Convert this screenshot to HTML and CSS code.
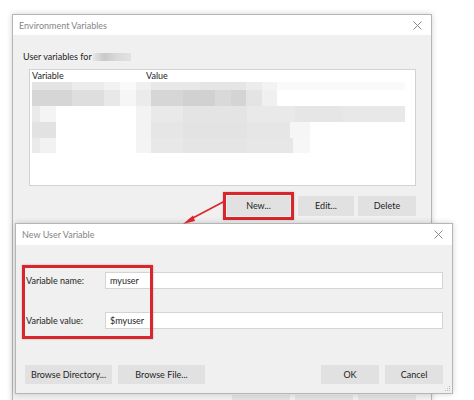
FILE: index.html
```html
<!DOCTYPE html>
<html>
<head>
    <title>Environment Variables</title>
    <link rel="stylesheet" href="styles.css">
</head>
<body>
    <div class="desk">
        <!-- 后面的 Environment Variables 窗口 -->
        <div class="win env-win">
            <div class="win-title">
                <span>Environment Variables</span>
                <svg class="close" width="9" height="9" viewBox="0 0 9 9"><path d="M0.5 0.5L8.5 8.5M8.5 0.5L0.5 8.5" stroke="#8a8a8a" stroke-width="1"/></svg>
            </div>
            <div class="win-body env-body">
                <div class="group-label">User variables for <span class="name-blur"></span></div>
                <div class="var-list">
                    <div class="list-head">
                        <div class="col-var">Variable</div>
                        <div class="col-val">Value</div>
                    </div>
                    <div class="mosaic" id="mosaic"></div>
                </div>
                <div class="btn-row">
                    <span class="mark"><button class="btn w63">New...</button></span>
                    <button class="btn w56">Edit...</button>
                    <button class="btn w58">Delete</button>
                </div>
                <!-- 被遮住的底部按钮，只露出顶边 -->
                <div class="btn-row footer-row">
                    <button class="btn w58"></button>
                    <button class="btn w58"></button>
                    <button class="btn w58"></button>
                </div>
            </div>
        </div>

        <!-- 红色箭头标注 -->
        <svg class="arrow" width="60" height="40" viewBox="0 0 60 40">
            <path d="M48 3L12 22" stroke="#d9252b" stroke-width="1.6" fill="none"/>
            <path d="M6 26L16 17.5L18 23Z" fill="#d9252b"/>
        </svg>

        <!-- 前面的 New User Variable 窗口 -->
        <div class="win new-win">
            <div class="win-title">
                <span>New User Variable</span>
                <svg class="close" width="9" height="9" viewBox="0 0 9 9"><path d="M0.5 0.5L8.5 8.5M8.5 0.5L0.5 8.5" stroke="#8a8a8a" stroke-width="1"/></svg>
            </div>
            <div class="win-body new-body">
                <div class="form">
                    <div class="form-row">
                        <div class="form-label">Variable name:</div>
                        <div class="input">myuser</div>
                    </div>
                    <div class="form-row">
                        <div class="form-label">Variable value:</div>
                        <div class="input">$myuser</div>
                    </div>
                    <div class="mark-box"></div>
                </div>
                <div class="dlg-buttons">
                    <button class="btn w87">Browse Directory...</button>
                    <button class="btn w87">Browse File...</button>
                    <div class="spacer"></div>
                    <button class="btn w58">OK</button>
                    <button class="btn w58">Cancel</button>
                </div>
                <svg class="grip" width="6" height="6" viewBox="0 0 6 6">
                    <rect x="4" y="0" width="1" height="1" fill="#bbb"/>
                    <rect x="2" y="2" width="1" height="1" fill="#bbb"/>
                    <rect x="4" y="2" width="1" height="1" fill="#bbb"/>
                    <rect x="0" y="4" width="1" height="1" fill="#bbb"/>
                    <rect x="2" y="4" width="1" height="1" fill="#bbb"/>
                    <rect x="4" y="4" width="1" height="1" fill="#bbb"/>
                </svg>
            </div>
        </div>
    </div>
    <script>
        // 打码区域：每行 [宽度, 颜色]
        const rows = [
            { h: 8, cells: [[2, 'transparent'], [40, '#e4e4e4'], [32, '#ececec'], [16, '#f2f2f2'], [16, '#fafafa'], [15, '#f0f0f0'], [49, '#e8e8e8'], [46, '#e5e5e5'], [16, '#ececec'], [15, '#f3f3f3'], [128, '#fafafa']] },
            { h: 16, cells: [[2, 'transparent'], [40, '#d6d6d6'], [32, '#dedede'], [16, '#e8e8e8'], [16, '#f6f6f6'], [15, '#ebebeb'], [32, '#d6d6d6'], [32, '#d1d1d1'], [16, '#d9d9d9'], [15, '#d4d4d4'], [16, '#e4e4e4'], [15, '#f0f0f0']] },
            { h: 16, cells: [[2, 'transparent'], [8, '#eaeaea'], [16, '#f4f4f4'], [80, 'transparent'], [15, '#f3f3f3'], [32, '#e9e9e9'], [64, '#e4e4e4'], [48, '#e9e9e9'], [48, '#e6e6e6'], [62, '#e8e8e8']] },
            { h: 16, cells: [[2, 'transparent'], [24, '#e2e2e2'], [80, 'transparent'], [15, '#f3f3f3'], [32, '#e6e6e6'], [64, '#e3e3e3'], [43, '#e6e6e6'], [20, '#f6f6f6']] },
            { h: 15, cells: [[2, 'transparent'], [8, '#eaeaea'], [16, '#f2f2f2'], [80, 'transparent'], [15, '#f4f4f4'], [32, '#e8e8e8'], [64, '#e5e5e5'], [46, '#e7e7e7'], [17, '#f7f7f7']] }
        ];
        function renderMosaic() {
            const box = document.getElementById('mosaic');
            rows.forEach(row => {
                const line = document.createElement('div');
                line.className = 'mosaic-row';
                line.style.height = row.h + 'px';
                row.cells.forEach(([w, c]) => {
                    const cell = document.createElement('span');
                    cell.style.width = w + 'px';
                    cell.style.background = c;
                    line.appendChild(cell);
                });
                box.appendChild(line);
            });
        }
        renderMosaic();
    </script>
</body>
</html>
```

FILE: styles.css
```css
/* Windows 10 风格对话框 */
body {
    margin: 0;
    background: #fff;
    font-family: Lato, "Open Sans", sans-serif;
    font-size: 9px;
    color: #1e1e1e;
}
.desk {
    position: relative;
    width: 474px;
    height: 400px;
    overflow: hidden;
}
.win {
    position: absolute;
    background: #f0f0f0;
    border: 1px solid #b5b5b5;
    box-shadow: 0 0 6px rgba(0,0,0,0.18);
    display: flex;
    flex-direction: column;
}
.env-win {
    left: 12px;
    top: 14px;
    width: 418px;
    height: 420px;
}
.new-win {
    left: 15px;
    top: 223px;
    width: 436px;
    height: 169px;
    z-index: 1;
}
.win-title {
    height: 20px;
    background: #fff;
    display: flex;
    align-items: center;
    justify-content: space-between;
    padding: 0 9px 0 6px;
    color: #858585;
    flex-shrink: 0;
}
.new-win .win-title {
    height: 21px;
}
.close {
    display: block;
}
.win-body {
    flex: 1;
    position: relative;
}
.env-body {
    padding: 15px 15px 0 10px;
}
.group-label {
    height: 14px;
    line-height: 14px;
    display: flex;
    align-items: center;
    gap: 1px;
}
.name-blur {
    display: inline-block;
    width: 38px;
    height: 8px;
    background: linear-gradient(90deg, #e6e6e6, #c9c9c9 30%, #d8d8d8 60%, #e2e2e2);
}
.var-list {
    margin: 5px 0 0 6px;
    height: 115px;
    background: #fff;
    border: 1px solid #d2d2d2;
}
.list-head {
    display: flex;
    height: 12px;
    line-height: 12px;
}
.col-var {
    width: 114px;
    padding-left: 2px;
}
.mosaic-row {
    display: flex;
}
.mosaic-row span {
    display: block;
    height: 100%;
    flex-shrink: 0;
}
.btn-row {
    display: flex;
    justify-content: flex-end;
    align-items: center;
    gap: 4px;
    margin-top: 6px;
    height: 27px;
}
.footer-row {
    margin-top: 176px;
    height: 20px;
    gap: 5px;
}
.btn {
    height: 20px;
    border: none;
    background: #e1e1e1;
    font: inherit;
    color: #1e1e1e;
    padding: 0;
    text-align: center;
}
.w56 { width: 56px; }
.w58 { width: 58px; }
.w63 { width: 63px; }
.w87 { width: 87px; }
.mark {
    display: block;
    border: 3px solid #d9252b;
    padding: 1px;
    box-shadow: 0 0 2px rgba(0,0,0,0.25);
}
.mark .btn {
    display: block;
}
.arrow {
    position: absolute;
    left: 177px;
    top: 198px;
    z-index: 2;
}
.new-body {
    padding: 27px 9px 0 9px;
    display: flex;
    flex-direction: column;
}
.form {
    position: relative;
    display: flex;
    flex-direction: column;
    gap: 23px;
}
.form-row {
    display: flex;
    align-items: center;
    height: 17px;
}
.form-label {
    width: 79px;
    padding-left: 1px;
}
.input {
    flex: 1;
    height: 15px;
    line-height: 15px;
    background: #fff;
    border: 1px solid #d4d4d4;
    padding-left: 4px;
}
.mark-box {
    position: absolute;
    left: -3px;
    top: -7px;
    width: 125px;
    height: 68px;
    border: 3px solid #d9252b;
    box-shadow: 0 0 2px rgba(0,0,0,0.25);
}
.dlg-buttons {
    display: flex;
    gap: 6px;
    margin-top: 36px;
}
.dlg-buttons .btn {
    height: 19px;
}
.spacer {
    flex: 1;
}
.grip {
    position: absolute;
    right: 1px;
    bottom: 1px;
}
```
